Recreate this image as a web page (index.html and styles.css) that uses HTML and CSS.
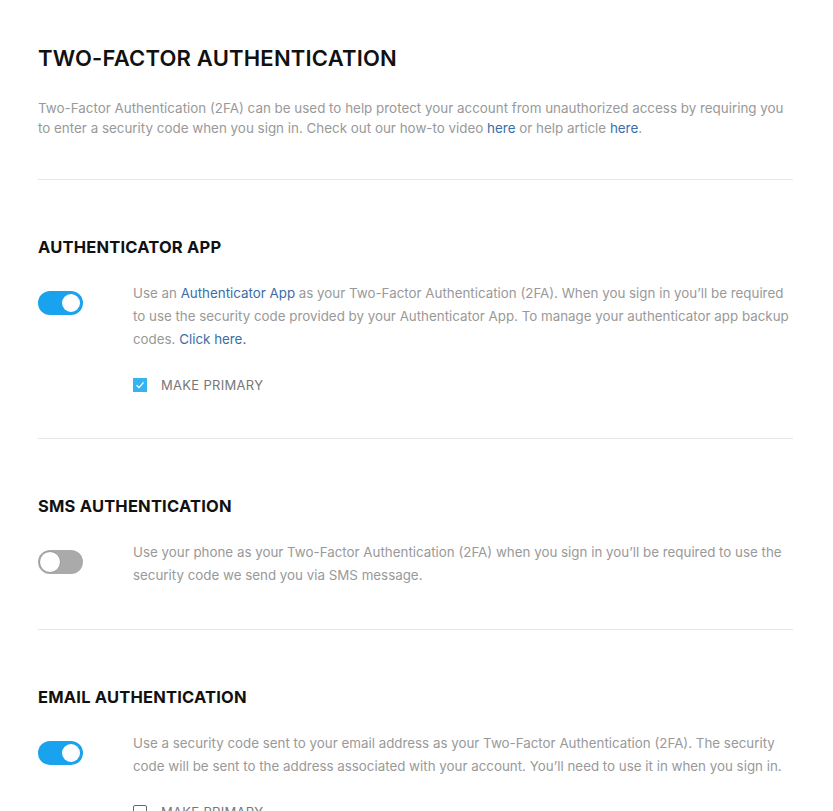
FILE: index.html
```html
<!DOCTYPE html>
<html>
<head>
<meta charset="utf-8">
<link rel="stylesheet" href="styles.css">
</head>
<body>
<main class="page">
  <header class="intro">
    <h1 class="title">TWO-FACTOR AUTHENTICATION</h1>
    <p class="lead">Two-Factor Authentication (2FA) can be used to help protect your account from unauthorized access by requiring you to enter a security code when you sign in. Check out our how-to video <a href="#" class="link">here</a> or help article <a href="#" class="link">here</a>.</p>
  </header>

  <section class="method">
    <h2 class="method-title">AUTHENTICATOR APP</h2>
    <div class="method-row">
      <span class="toggle toggle-on"><span class="knob"></span></span>
      <div class="method-body">
        <p class="desc">Use an <a href="#" class="link">Authenticator App</a> as your Two-Factor Authentication (2FA). When you sign in you’ll be required to use the security code provided by your Authenticator App. To manage your authenticator app backup codes. <a href="#" class="link">Click here.</a></p>
        <label class="check">
          <span class="box box-checked"><svg viewBox="0 0 14 14" width="14" height="14"><path d="M3.6 7.2 L6 9.6 L10.6 4.4" fill="none" stroke="#fff" stroke-width="1.3"/></svg></span>
          <span class="check-label">MAKE PRIMARY</span>
        </label>
      </div>
    </div>
  </section>

  <section class="method method-plain">
    <h2 class="method-title">SMS AUTHENTICATION</h2>
    <div class="method-row">
      <span class="toggle toggle-off"><span class="knob"></span></span>
      <div class="method-body">
        <p class="desc">Use your phone as your Two-Factor Authentication (2FA) when you sign in you’ll be required to use the security code we send you via SMS message.</p>
      </div>
    </div>
  </section>

  <section class="method">
    <h2 class="method-title">EMAIL AUTHENTICATION</h2>
    <div class="method-row">
      <span class="toggle toggle-on"><span class="knob"></span></span>
      <div class="method-body">
        <p class="desc">Use a security code sent to your email address as your Two-Factor Authentication (2FA). The security code will be sent to the address associated with your account. You’ll need to use it in when you sign in.</p>
        <label class="check">
          <span class="box"></span>
          <span class="check-label">MAKE PRIMARY</span>
        </label>
      </div>
    </div>
  </section>
</main>
</body>
</html>
```
FILE: styles.css
```css
html, body {
  margin: 0;
  padding: 0;
  background: #fff;
}
body {
  font-family: "Inter", "Liberation Sans", sans-serif;
  color: #999;
}
.page {
  width: 755px;
  padding: 0 0 0 38px;
}
.intro {
  padding-top: 44px;
  padding-bottom: 41px;
  border-bottom: 1px solid #e6e6e6;
}
.title {
  margin: 0;
  font-size: 22px;
  line-height: 28px;
  font-weight: 600;
  color: #111;
  letter-spacing: 0.2px;
}
.lead {
  margin: 26px 0 0 0;
  font-size: 13.4px;
  line-height: 20px;
  color: #999;
}
.link {
  color: #3a6ea8;
  text-decoration: none;
}
.method {
  border-bottom: 1px solid #e6e6e6;
  padding-top: 56px;
  padding-bottom: 45px;
}
.method-plain {
  padding-bottom: 42px;
}
.method-title {
  margin: 0;
  font-size: 16.5px;
  line-height: 22px;
  font-weight: 700;
  color: #111;
  letter-spacing: 0.2px;
}
.method-row {
  display: flex;
  margin-top: 24px;
}
.toggle {
  flex: none;
  width: 45px;
  height: 24px;
  border-radius: 12px;
  margin-top: 9px;
  margin-right: 50px;
  position: relative;
  box-sizing: border-box;
}
.toggle-on {
  background: #19a3ee;
}
.toggle-off {
  background: #aaa;
}
.knob {
  position: absolute;
  top: 3px;
  width: 18px;
  height: 18px;
  border-radius: 50%;
  background: #fff;
}
.toggle-on .knob {
  right: 3px;
}
.toggle-off .knob {
  left: 1px;
  top: 1px;
  width: 22px;
  height: 22px;
  border: 1px solid #999;
  box-sizing: border-box;
}
.method-body {
  flex: 1;
}
.desc {
  margin: 0;
  font-size: 13.35px;
  line-height: 23px;
  color: #999;
}
.check {
  display: flex;
  align-items: center;
  margin-top: 26px;
}
.box {
  width: 14px;
  height: 14px;
  box-sizing: border-box;
  border: 1px solid #666;
  border-radius: 2px;
  margin-right: 14px;
  display: flex;
}
.box-checked {
  background: #37b4f0;
  border: none;
  border-radius: 0;
}
.check-label {
  font-size: 13px;
  color: #777;
  letter-spacing: 0.3px;
}
```
